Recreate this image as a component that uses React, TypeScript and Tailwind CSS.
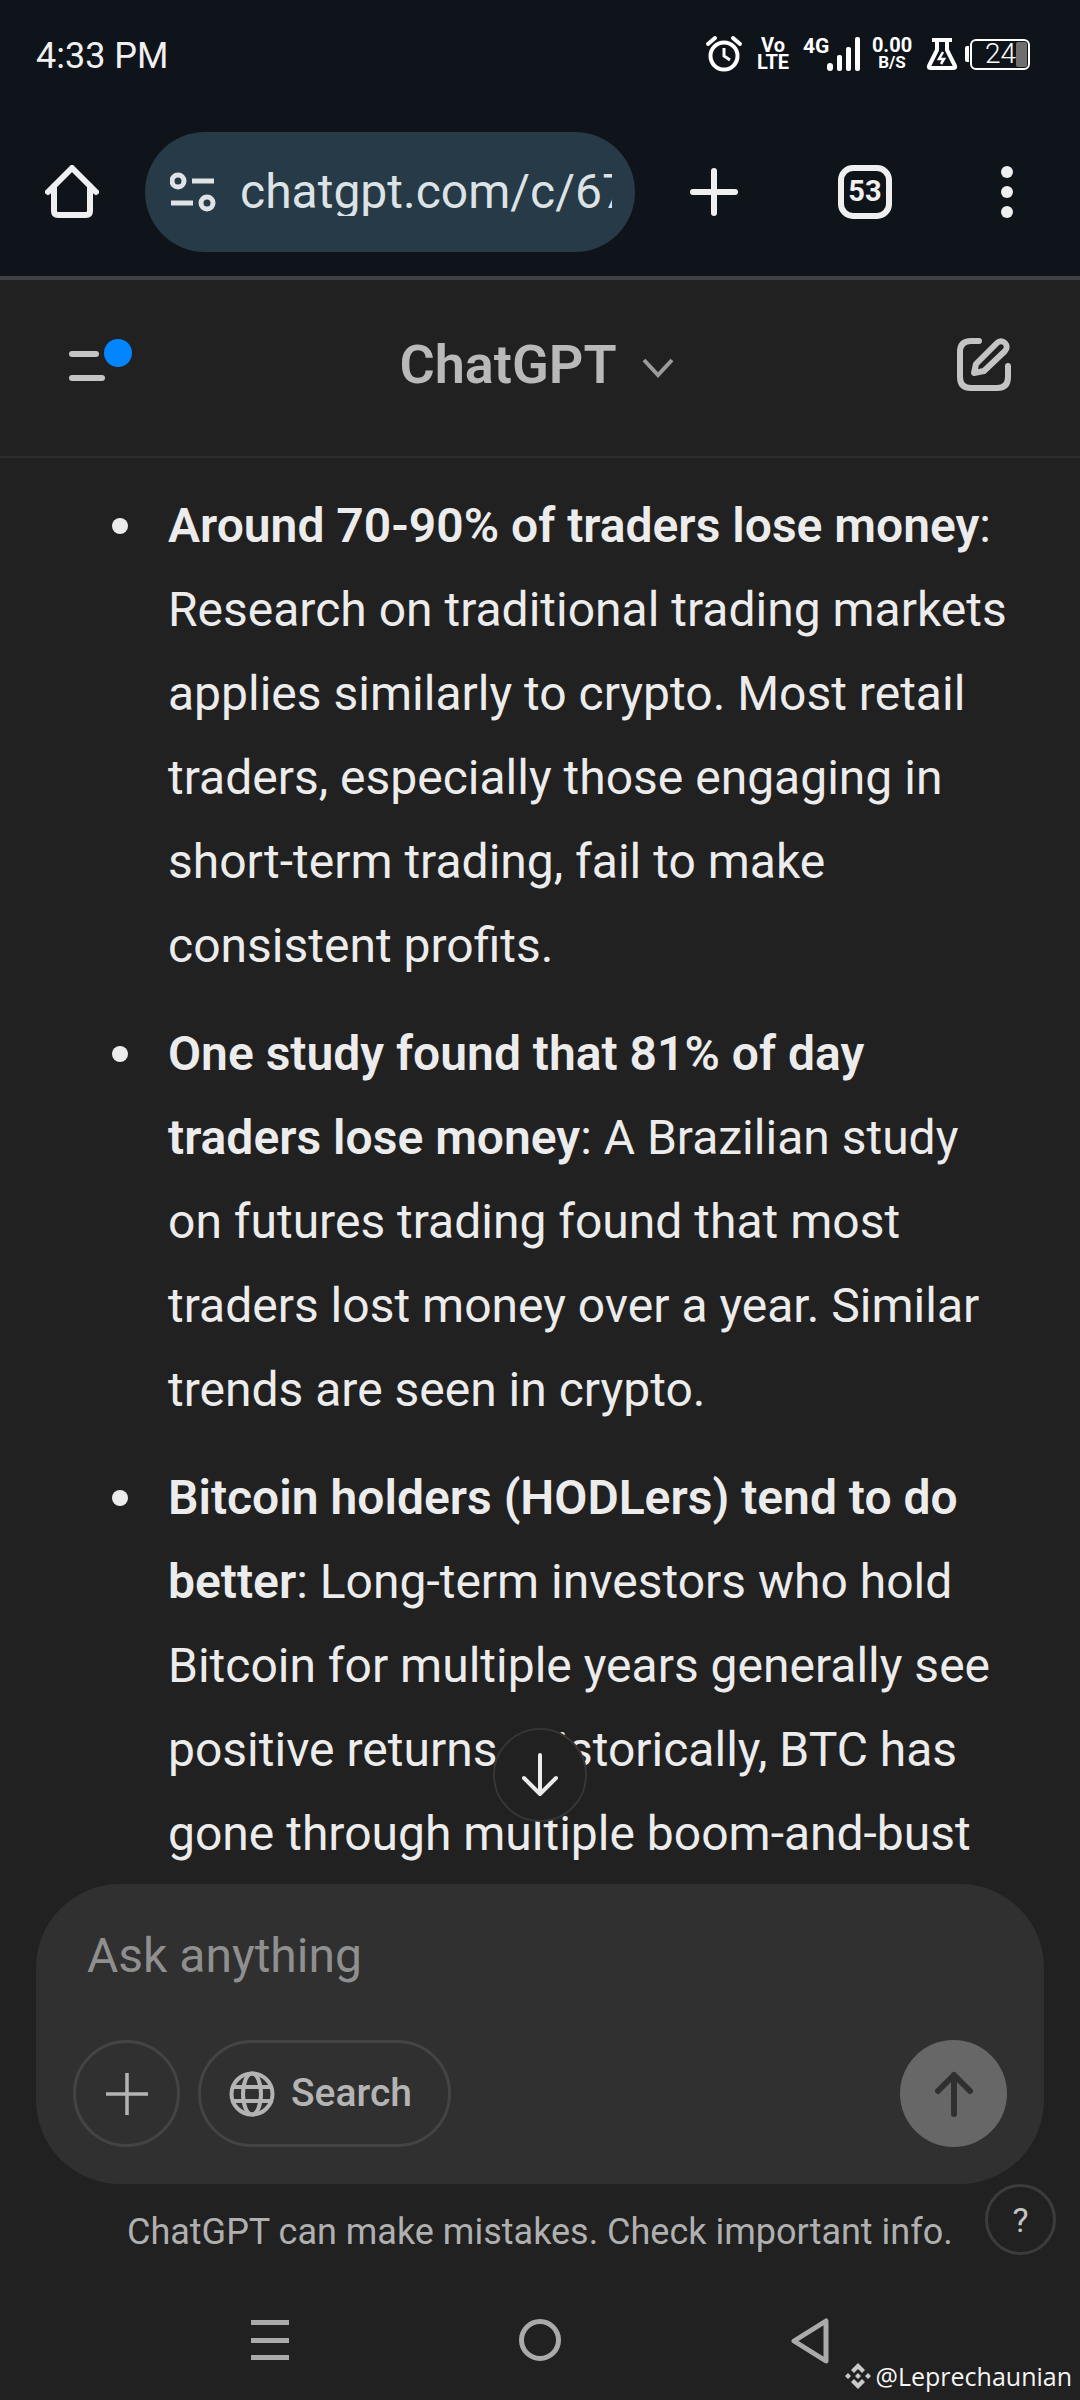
import React from 'react';

const BULLETS: { bold: string; rest: string }[] = [
  {
    bold: 'Around 70-90% of traders lose money',
    rest: ': Research on traditional trading markets applies similarly to crypto. Most retail traders, especially those engaging in short-term trading, fail to make consistent profits.',
  },
  {
    bold: 'One study found that 81% of day traders lose money',
    rest: ': A Brazilian study on futures trading found that most traders lost money over a year. Similar trends are seen in crypto.',
  },
  {
    bold: 'Bitcoin holders (HODLers) tend to do better',
    rest: ': Long-term investors who hold Bitcoin for multiple years generally see positive returns. Historically, BTC has gone through multiple boom-and-bust cycles, but long-term holders often come out ahead.',
  },
];

const StatusBar = () => (
  <div className="h-[113px] flex items-center justify-between pl-[36px] pr-[50px] pb-[5px]">
    <span className="mt-[4px] text-[36px] text-[#f0f0f0] leading-none">4:33 PM</span>
    <div className="flex items-center text-white">
      <svg width="38" height="38" viewBox="0 0 38 38" fill="none" stroke="currentColor" strokeWidth="4">
        <circle cx="19" cy="21" r="13.5" />
        <path d="M19 13v8l6 4" strokeWidth="3" />
        <path d="M3 9l7-6M35 9l-7-6" strokeLinecap="round" />
      </svg>
      <div className="ml-[13px] w-[34px] flex flex-col items-center text-[20px] font-bold leading-[17px]">
        <span>Vo</span>
        <span>LTE</span>
      </div>
      <div className="ml-[13px] relative w-[58px] h-[34px]">
        <span className="absolute left-0 top-[-2px] text-[21px] font-bold leading-[22px]">4G</span>
        <svg className="absolute right-0 top-0" width="34" height="34" viewBox="0 0 34 34" fill="currentColor">
          <rect x="0" y="26" width="6" height="8" rx="3" />
          <rect x="10" y="18" width="5" height="16" rx="2" />
          <rect x="19" y="10" width="5" height="24" rx="2" />
          <rect x="28" y="0" width="5" height="34" rx="2" />
        </svg>
      </div>
      <div className="ml-[11px] w-[40px] flex flex-col items-center text-[20px] font-bold leading-[17px]">
        <span>0.00</span>
        <span className="text-[17px]">B/S</span>
      </div>
      <svg className="ml-[14px]" width="32" height="32" viewBox="0 0 32 32" fill="none" stroke="currentColor" strokeWidth="4">
        <path d="M6 2h20M11 2v10L3 28q-1 2 2 2h22q3 0 2-2l-8-16V2" />
        <path d="M17 14l-4 7h5l-3 5" strokeWidth="2.5" />
      </svg>
      <div className="ml-[7px] w-[4px] h-[16px] bg-white rounded-l-[2px]" />
      <div className="ml-[1px] w-[60px] h-[31px] border-2 border-white rounded-[6px] flex items-center justify-between pl-[13px] pr-[1px]">
        <span className="text-[28px] font-light leading-none">24</span>
        <div className="w-[15px] h-[25px] bg-[#6f6f6f] rounded-[2px]" />
      </div>
    </div>
  </div>
);

const Toolbar = () => (
  <div className="h-[167px] flex items-center border-b-[4px] border-[#3c4044] pb-[6px] pl-[45px] text-[#efefef]">
    <svg width="54" height="54" viewBox="0 0 54 54" fill="none" stroke="currentColor" strokeWidth="6" strokeLinecap="round" strokeLinejoin="round">
      <path d="M3 27L27 3l24 24M9 21v25q0 4 4 4h28q4 0 4-4V21" />
    </svg>
    <div className="ml-[46px] w-[490px] h-[120px] rounded-[60px] bg-[#263a47] flex items-center pl-[25px] pr-[23px]">
      <svg className="shrink-0" width="46" height="40" viewBox="0 0 46 40" fill="none" stroke="#dfe3e6" strokeWidth="5">
        <circle cx="8" cy="9" r="6" />
        <path d="M22 9h22M1 31h22" />
        <circle cx="37" cy="31" r="6" />
      </svg>
      <div className="ml-[24px] overflow-hidden whitespace-nowrap text-[48px] leading-none text-[#dde2e5]">chatgpt.com/c/67b</div>
    </div>
    <svg className="ml-[55px]" width="48" height="48" viewBox="0 0 48 48" stroke="currentColor" strokeWidth="6" strokeLinecap="round">
      <path d="M24 3v42M3 24h42" />
    </svg>
    <div className="ml-[100px] w-[54px] h-[54px] border-[6px] border-[#efefef] rounded-[15px] flex items-center justify-center text-[29px] font-bold leading-none">53</div>
    <div className="ml-[109px] flex flex-col gap-[8px]">
      <span className="w-[12px] h-[12px] rounded-full bg-[#efefef]" />
      <span className="w-[12px] h-[12px] rounded-full bg-[#efefef]" />
      <span className="w-[12px] h-[12px] rounded-full bg-[#efefef]" />
    </div>
  </div>
);

const ChatHeader = () => (
  <div className="h-[178px] shrink-0 border-b-[2px] border-[#2c2c2c] flex items-center justify-between pl-[69px] pr-[68px] pb-[6px]">
    <div className="relative w-[64px] h-[40px] flex flex-col justify-between pt-[6px] pb-[4px]">
      <span className="w-[30px] h-[6px] rounded-full bg-[#c4c4c4]" />
      <span className="w-[36px] h-[6px] rounded-full bg-[#c4c4c4]" />
      <span className="absolute left-[35px] top-[-6px] w-[28px] h-[28px] rounded-full bg-[#0285ff]" />
    </div>
    <div className="flex items-center ml-[-3px] mr-[13px]">
      <span className="text-[54px] font-semibold leading-none text-[#b9b9b9]">ChatGPT</span>
      <svg className="ml-[25px] mt-[6px]" width="32" height="20" viewBox="0 0 32 20" fill="none" stroke="#9b9b9b" strokeWidth="4">
        <path d="M2 2l14 15L30 2" />
      </svg>
    </div>
    <svg width="56" height="56" viewBox="0 0 56 56" fill="none" stroke="#c4c4c4" strokeWidth="6" strokeLinecap="round" strokeLinejoin="round">
      <path d="M23 4H15Q4 4 4 15v25q0 11 11 11h26q11 0 11-11V29" />
      <path d="M18 36l2-9L41 6a5.500 5.500 0 0 1 8 8L28 34z" />
    </svg>
  </div>
);

const Composer = () => (
  <div className="mx-[36px] h-[300px] shrink-0 rounded-[84px] bg-[#303030] pt-[44px] pb-[37px] px-[37px] flex flex-col justify-between">
    <div className="pl-[14px] text-[48px] leading-[56px] text-[#8f8f8f]">Ask anything</div>
    <div className="flex items-center">
      <div className="w-[107px] h-[107px] rounded-full border-[3px] border-[#444444] flex items-center justify-center">
        <svg width="42" height="42" viewBox="0 0 42 42" stroke="#b4b4b4" strokeWidth="3.5">
          <path d="M21 0v42M0 21h42" />
        </svg>
      </div>
      <div className="ml-[18px] w-[253px] h-[107px] rounded-full border-[3px] border-[#444444] flex items-center pl-[28px]">
        <svg width="46" height="46" viewBox="0 0 46 46" fill="none" stroke="#b4b4b4" strokeWidth="4">
          <circle cx="23" cy="23" r="20.5" />
          <ellipse cx="23" cy="23" rx="9" ry="20.5" />
          <path d="M3 16h40M3 30h40" />
        </svg>
        <span className="ml-[16px] text-[39px] font-medium leading-none text-[#b4b4b4]">Search</span>
      </div>
      <div className="ml-auto w-[107px] h-[107px] rounded-full bg-[#676767] flex items-center justify-center">
        <svg width="42" height="46" viewBox="0 0 42 46" fill="none" stroke="#303030" strokeWidth="6" strokeLinecap="round" strokeLinejoin="round">
          <path d="M21 43V4M5 20L21 4l16 16" />
        </svg>
      </div>
    </div>
  </div>
);

export default function App() {
  return (
    <div className="relative w-[1080px] h-[2400px] overflow-hidden flex flex-col bg-[#212121] font-['Roboto',sans-serif]">
      <div className="bg-[#0f141a] shrink-0">
        <StatusBar />
        <Toolbar />
      </div>
      <ChatHeader />

      <div className="flex-1 min-h-0 overflow-hidden pt-[26px] pb-[9px]">
        <ul className="pl-[112px] pr-[62px] text-[48px] leading-[84px] text-[#ececec] space-y-[24px]">
          {BULLETS.map(b => (
            <li key={b.bold} className="flex">
              <span className="shrink-0 w-[16px] h-[16px] mt-[34px] mr-[40px] rounded-full bg-[#ececec]" />
              <div>
                <strong className="font-semibold">{b.bold}</strong>
                {b.rest}
              </div>
            </li>
          ))}
        </ul>
      </div>

      {/* scroll to bottom */}
      <div className="absolute left-[493px] top-[1728px] w-[94px] h-[94px] rounded-full bg-[#212121] border-2 border-[#363636] flex items-center justify-center">
        <svg width="36" height="44" viewBox="0 0 36 44" fill="none" stroke="#ececec" strokeWidth="4" strokeLinecap="round" strokeLinejoin="round">
          <path d="M18 2v39M2 25l16 16 16-16" />
        </svg>
      </div>

      <Composer />

      <div className="h-[71px] shrink-0 relative flex items-center pl-[127px] pt-[24px]">
        <span className="text-[36px] leading-none text-[#b0b0b0]">ChatGPT can make mistakes. Check important info.</span>
        <div className="absolute left-[985px] top-0 w-[71px] h-[71px] rounded-full border-[3px] border-[#3c3c3c] flex items-center justify-center text-[34px] leading-none text-[#c4c4c4]">?</div>
      </div>

      <div className="h-[145px] shrink-0 flex items-start pl-[251px] pt-[65px]">
        <div className="w-[38px] h-[40px] flex flex-col justify-between">
          <span className="h-[5px] bg-[#aaaaaa]" />
          <span className="h-[5px] bg-[#aaaaaa]" />
          <span className="h-[5px] bg-[#aaaaaa]" />
        </div>
        <div className="ml-[230px] mt-[-1px] w-[42px] h-[42px] rounded-full border-[5px] border-[#aaaaaa]" />
        <svg className="ml-[230px] mt-[-2px]" width="38" height="46" viewBox="0 0 38 46" fill="none" stroke="#aaaaaa" strokeWidth="5" strokeLinejoin="round">
          <path d="M35 3v40L3 23z" />
        </svg>
      </div>

      {/* watermark */}
      <div className="absolute right-[8px] top-[2359px] flex items-center text-[#f4f4f4]">
        <svg width="28" height="28" viewBox="0 0 28 28" fill="#c9c9c9">
          <path d="M14 1l7 7-3 3-4-4-4 4-3-3zM14 27l7-7-3-3-4 4-4-4-3 3zM4 11l3 3-3 3-3-3zM24 11l3 3-3 3-3-3zM14 11l3 3-3 3-3-3z" />
        </svg>
        <span className="ml-[4px] font-['Open_Sans',sans-serif] text-[25px] leading-[34px]">@Leprechaunian</span>
      </div>
    </div>
  );
}
